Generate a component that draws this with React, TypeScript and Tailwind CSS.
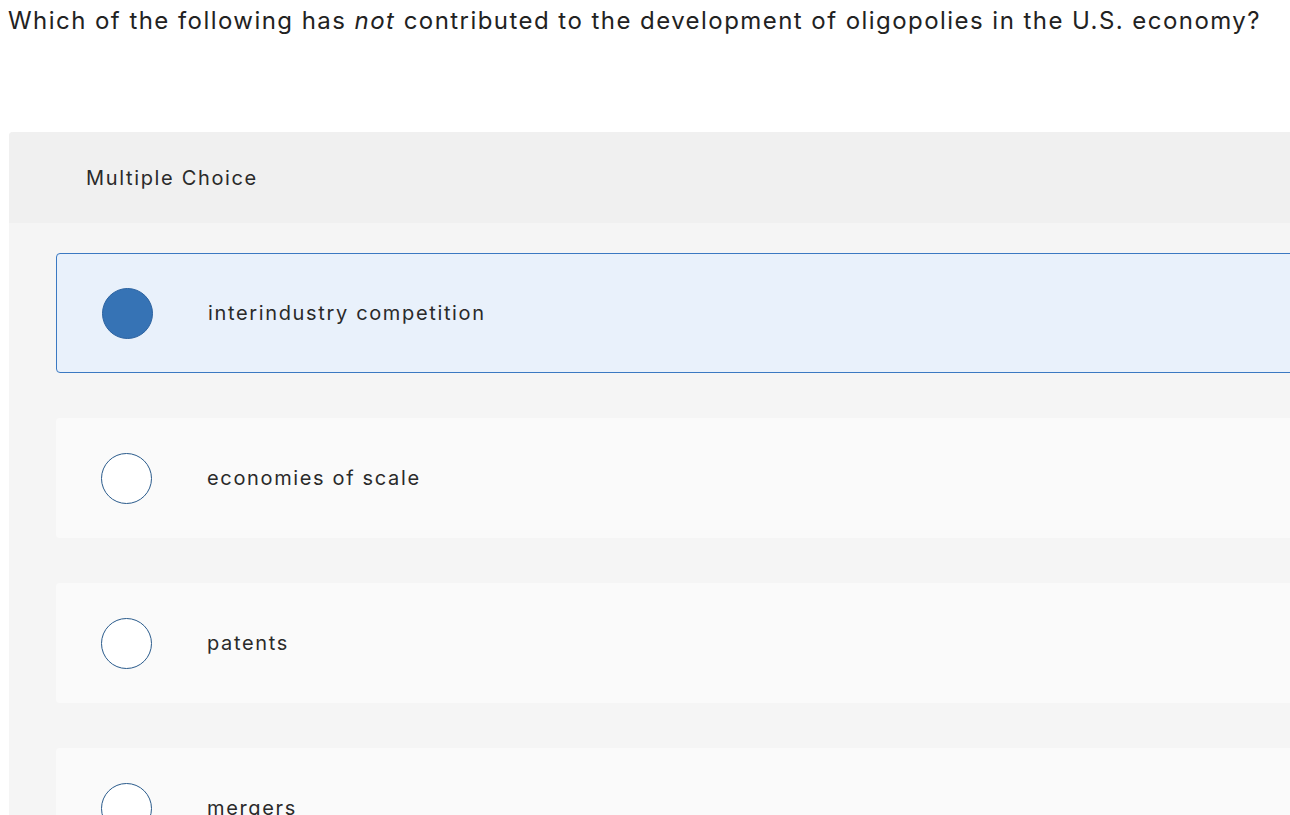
const options = [
  { label: "interindustry competition", selected: true },
  { label: "economies of scale", selected: false },
  { label: "patents", selected: false },
  { label: "mergers", selected: false },
];

function Radio({ selected }: { selected: boolean }) {
  return selected ? (
    <span className="block h-[51px] w-[51px] shrink-0 rounded-full border border-[#2b62a0] bg-[#3673b5]" />
  ) : (
    <span className="block h-[51px] w-[51px] shrink-0 rounded-full border-[1.5px] border-[#2a5b8c] bg-white" />
  );
}

export default function App() {
  return (
    <div className="h-[815px] w-[1290px] overflow-hidden bg-white font-['Inter','Liberation_Sans',sans-serif] text-[#222]">
      <h1 className="whitespace-nowrap pl-[8px] pt-[3px] text-[24px] leading-[36px] font-normal tracking-[1.45px]">
        Which of the following has <em>not</em> contributed to the development of oligopolies in the U.S. economy?
      </h1>
      <div className="ml-[9px] mt-[93px] w-[1400px] overflow-hidden rounded-tl-[4px] bg-[#f5f5f5]">
        <div className="flex h-[91px] items-center bg-[#f0f0f0] pl-[77px] text-[20px] tracking-[1.65px] text-[#2a2a2a]">
          Multiple Choice
        </div>
        <div className="flex flex-col gap-[45px] pl-[47px] pt-[30px]">
          {options.map((o) => (
            <div
              key={o.label}
              className={
                o.selected
                  ? "flex h-[120px] items-center rounded-[4px] border border-[#3b79c2] bg-[#e9f1fb] pl-[45px]"
                  : "flex h-[120px] items-center rounded-[4px] bg-[#fafafa] pl-[45px]"
              }
            >
              <Radio selected={o.selected} />
              <span className="pl-[55px] text-[20px] tracking-[1.65px] text-[#2a2a2a]">{o.label}</span>
            </div>
          ))}
        </div>
      </div>
    </div>
  );
}
